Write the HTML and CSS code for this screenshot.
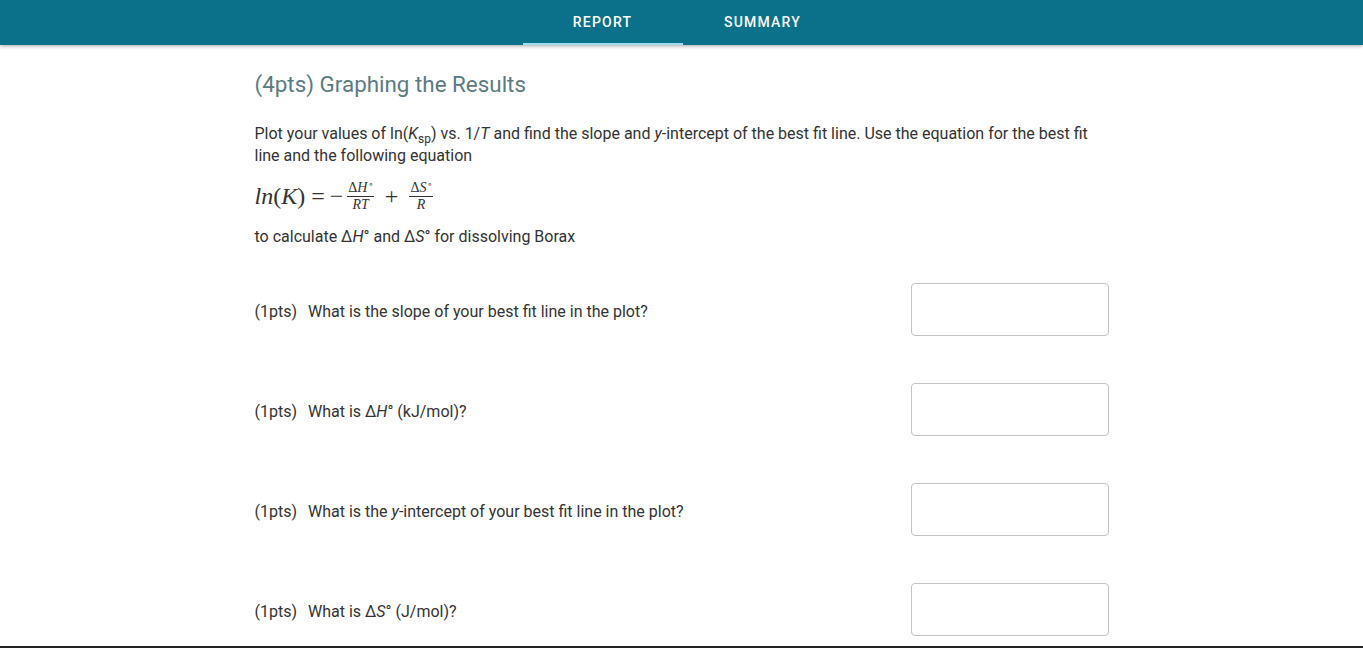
FILE: index.html
```html
<!DOCTYPE html>
<html lang="en">
<head>
<meta charset="utf-8">
<title>Report</title>
<link rel="stylesheet" href="styles.css">
</head>
<body>
<header class="topbar">
  <nav class="tabs">
    <a class="tab tab-active">Report</a>
    <a class="tab">Summary</a>
  </nav>
</header>
<main class="content">
  <h2 class="title">(4pts) Graphing the Results</h2>
  <p class="para">Plot your values of ln(<i>K</i><sub>sp</sub>) vs. 1/<i>T</i> and find the slope and <i>y</i>-intercept of the best fit line. Use the equation for the best fit line and the following equation</p>
  <div class="math">
    <span class="mi">ln</span><span class="mo">(</span><span class="mi">K</span><span class="mo">)</span>
    <span class="rel">=</span>
    <span class="minus">−</span>
    <span class="frac"><span class="num">Δ<i>H</i><sup>∘</sup></span><span class="den"><i>RT</i></span></span>
    <span class="plus">+</span>
    <span class="frac"><span class="num">Δ<i>S</i><sup>∘</sup></span><span class="den"><i>R</i></span></span>
  </div>
  <p class="para">to calculate Δ<i>H</i>° and Δ<i>S</i>° for dissolving Borax</p>

  <div class="questions">
    <div class="q-row">
      <div class="q-text"><span class="pts">(1pts)</span>What is the slope of your best fit line in the plot?</div>
      <input class="answer" type="text">
    </div>
    <div class="q-row">
      <div class="q-text"><span class="pts">(1pts)</span>What is Δ<i>H</i>° (kJ/mol)?</div>
      <input class="answer" type="text">
    </div>
    <div class="q-row">
      <div class="q-text"><span class="pts">(1pts)</span>What is the <i>y</i>-intercept of your best fit line in the plot?</div>
      <input class="answer" type="text">
    </div>
    <div class="q-row">
      <div class="q-text"><span class="pts">(1pts)</span>What is Δ<i>S</i>° (J/mol)?</div>
      <input class="answer" type="text">
    </div>
  </div>
</main>
<div class="bottom-edge"></div>
</body>
</html>
```
FILE: styles.css
```css
html, body {
  margin: 0;
  padding: 0;
  background: #ffffff;
}
body {
  font-family: Roboto, "Liberation Sans", sans-serif;
  color: #333333;
}
.topbar {
  height: 45px;
  background: #0b708a;
  box-shadow: 0 1px 4px rgba(0, 0, 0, 0.35);
  position: relative;
  z-index: 2;
}
.tabs {
  display: flex;
  justify-content: center;
  height: 100%;
  padding-left: 2px;
}
.tab {
  width: 160px;
  height: 100%;
  box-sizing: border-box;
  display: flex;
  align-items: center;
  justify-content: center;
  color: #ffffff;
  font-size: 14px;
  font-weight: 500;
  letter-spacing: 1.2px;
  text-transform: uppercase;
  padding-top: 1px;
  border-bottom: 2px solid transparent;
}
.tab-active {
  border-bottom-color: #9fdcef;
}
.content {
  width: 854px;
  margin: 0 auto;
  padding-top: 25px;
}
.title {
  margin: 0;
  font-size: 22.4px;
  font-weight: 400;
  line-height: 28px;
  color: #5b7b84;
}
.para {
  margin: 24px 0 0;
  font-size: 16px;
  line-height: 22px;
  color: #333333;
}
.title + .para {
  margin-top: 25px;
}
.para sub {
  font-size: 12px;
  line-height: 0;
  vertical-align: -4px;
}
.para + .math {
  margin-top: 12px;
}
.math + .para {
  margin-top: 13px;
}
.math {
  display: flex;
  align-items: center;
  height: 34px;
  font-family: "Liberation Serif", "DejaVu Serif", serif;
  font-size: 24px;
  color: #333333;
}
.mi {
  font-style: italic;
}
.rel {
  margin: 0 5px 0 6px;
}
.minus {
  margin-right: 2px;
}
.plus {
  margin: 0 9px 0 9px;
}
.frac {
  display: inline-flex;
  flex-direction: column;
  align-items: center;
  font-size: 14px;
  line-height: 14px;
  padding: 0 2px;
}
.frac .num {
  padding: 0 1px 1px;
  border-bottom: 1px solid #333333;
}
.frac .den {
  padding-top: 1px;
}
.frac sup {
  font-size: 9px;
  line-height: 0;
  vertical-align: 5px;
  margin-left: 1px;
}
.questions {
  margin-top: 35px;
  display: flex;
  flex-direction: column;
  gap: 47px;
}
.q-row {
  display: flex;
  align-items: center;
  justify-content: space-between;
  height: 53px;
}
.q-text {
  font-size: 16px;
  line-height: 22px;
  padding-top: 4px;
}
.pts {
  margin-right: 11px;
}
.answer {
  width: 198px;
  height: 53px;
  box-sizing: border-box;
  border: 1px solid #c4c4c4;
  border-radius: 4px;
  background: #ffffff;
  margin: 0;
}
.bottom-edge {
  position: fixed;
  left: 0;
  right: 0;
  bottom: 0;
  height: 2px;
  background: #222222;
}
```
